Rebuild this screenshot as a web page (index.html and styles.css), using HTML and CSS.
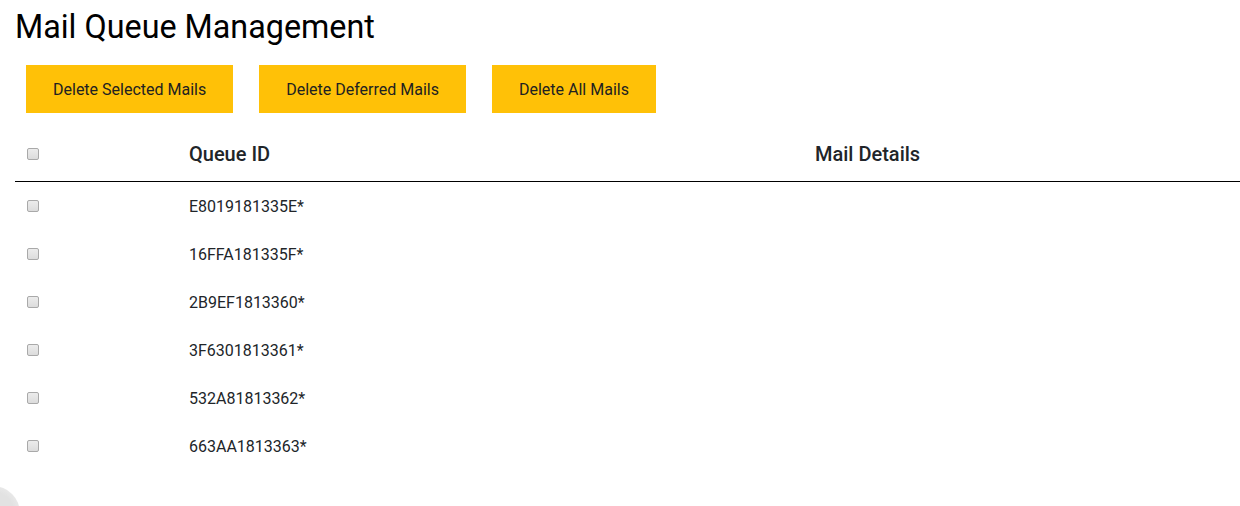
FILE: index.html
```html
<!DOCTYPE html>
<html lang="en">
    <head>
        <meta charset="UTF-8" />
        <meta name="viewport" content="width=device-width, initial-scale=1.0" />
        <title>Mail Queue Management</title>
        <link rel="stylesheet" href="styles.css">
    </head>
    <body>
        <div class="page">
            <h1>Mail Queue Management</h1>

            <div class="actions">
                <button>Delete Selected Mails</button>
                <button>Delete Deferred Mails</button>
                <button>Delete All Mails</button>
            </div>

            <div class="queue">
                <div class="row head">
                    <div class="cell check"><input type="checkbox" /></div>
                    <div class="cell">Queue ID</div>
                    <div class="cell">Mail Details</div>
                </div>
                <div class="row">
                    <div class="cell check"><input type="checkbox" /></div>
                    <div class="cell">E8019181335E*</div>
                    <div class="cell"></div>
                </div>
                <div class="row">
                    <div class="cell check"><input type="checkbox" /></div>
                    <div class="cell">16FFA181335F*</div>
                    <div class="cell"></div>
                </div>
                <div class="row">
                    <div class="cell check"><input type="checkbox" /></div>
                    <div class="cell">2B9EF1813360*</div>
                    <div class="cell"></div>
                </div>
                <div class="row">
                    <div class="cell check"><input type="checkbox" /></div>
                    <div class="cell">3F6301813361*</div>
                    <div class="cell"></div>
                </div>
                <div class="row">
                    <div class="cell check"><input type="checkbox" /></div>
                    <div class="cell">532A81813362*</div>
                    <div class="cell"></div>
                </div>
                <div class="row">
                    <div class="cell check"><input type="checkbox" /></div>
                    <div class="cell">663AA1813363*</div>
                    <div class="cell"></div>
                </div>
            </div>
        </div>
        <div class="corner"></div>
    </body>
</html>
```

FILE: styles.css
```css
* {
    box-sizing: border-box;
}
body {
    margin: 0;
    font-family: Roboto, "Liberation Sans", sans-serif;
    font-size: 16px;
    color: #212529;
    background-color: #fff;
    overflow: hidden;
}

.page {
    padding: 0 0 0 15px;
}

h1 {
    margin: 0;
    padding-top: 7px;
    font-size: 32.3px;
    font-weight: 400;
    line-height: 40px;
    color: #000;
}

.actions {
    display: flex;
    gap: 26px;
    margin: 18px 0 12px 11px;
}

.actions button {
    border: 0;
    border-radius: 0;
    height: 48px;
    padding: 0 27px;
    font: inherit;
    font-size: 16px;
    color: #212121;
    background-color: #ffc107;
    cursor: pointer;
}

.queue {
    width: 100%;
}

.row {
    display: grid;
    grid-template-columns: 162px 626px 1fr;
    height: 48px;
    align-items: center;
}

.row.head {
    height: 57px;
    padding-top: 1px;
    border-bottom: 1px solid #000;
    font-size: 20px;
    font-weight: 500;
}

.cell {
    padding: 0 12px;
}

.check {
    display: flex;
    align-items: center;
}

.check input {
    appearance: none;
    -webkit-appearance: none;
    margin: 0;
    width: 12px;
    height: 12px;
    border: 1px solid #a9a9a9;
    border-radius: 2px;
    background: linear-gradient(#ececec, #dcdcdc);
}

.corner {
    position: fixed;
    left: -34px;
    bottom: -34px;
    width: 54px;
    height: 54px;
    border-radius: 50%;
    background: radial-gradient(circle, #e2e2e2 55%, #f4f4f4 100%);
}
```
